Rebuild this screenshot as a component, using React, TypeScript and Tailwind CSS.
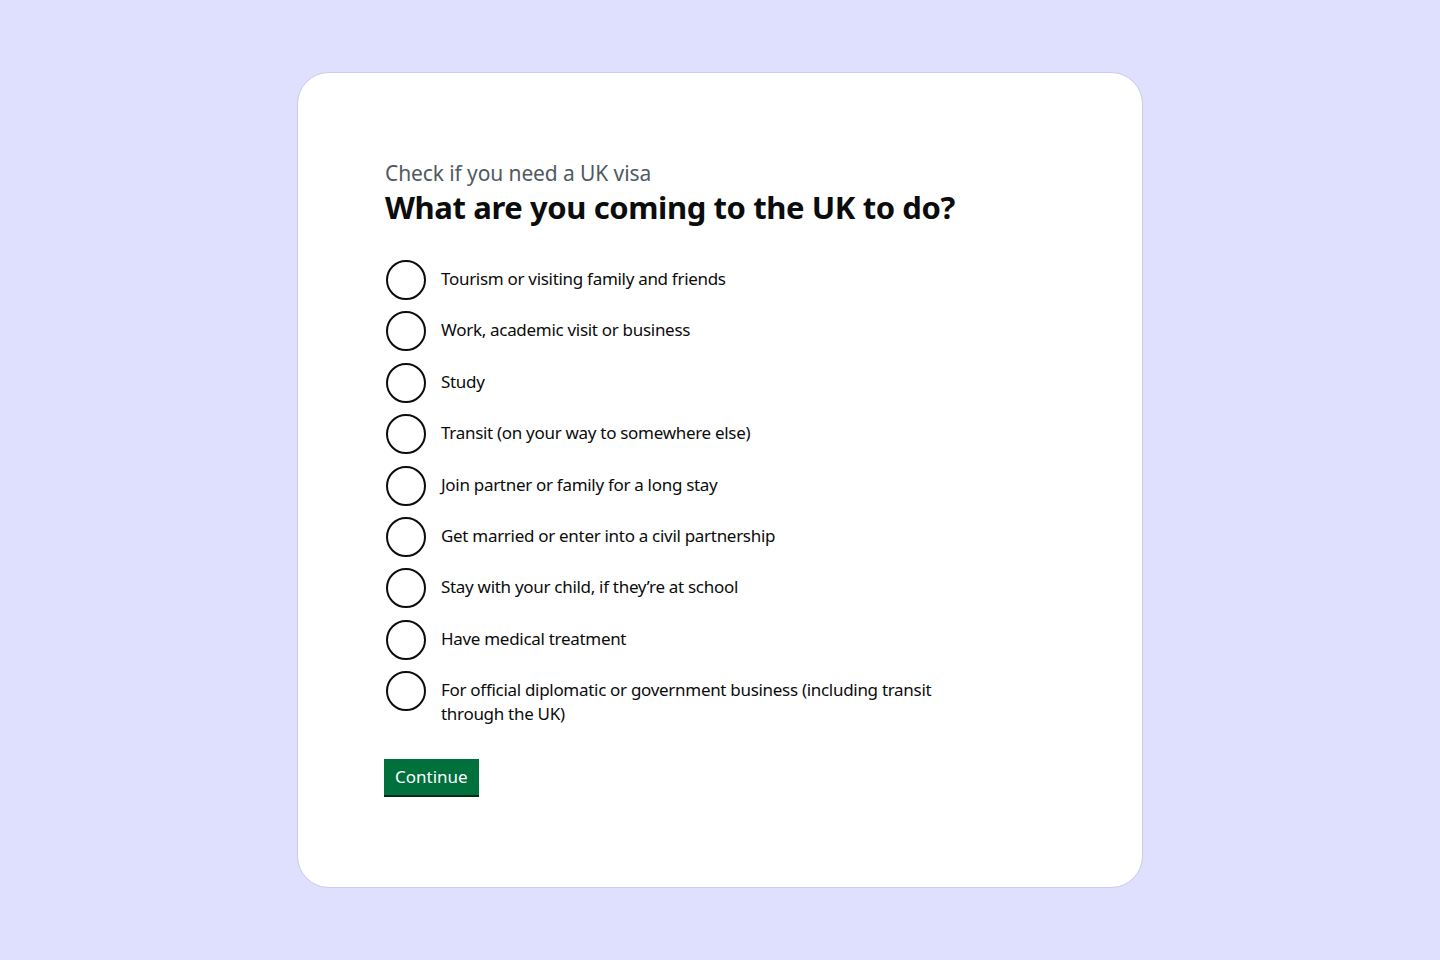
const options = [
  'Tourism or visiting family and friends',
  'Work, academic visit or business',
  'Study',
  'Transit (on your way to somewhere else)',
  'Join partner or family for a long stay',
  'Get married or enter into a civil partnership',
  'Stay with your child, if they\u2019re at school',
  'Have medical treatment',
  'For official diplomatic or government business (including transit through the UK)',
]

export default function App() {
  return (
    <div
      className="min-h-screen w-full bg-[#dfdffe] flex justify-center pt-[72px]"
      style={{ fontFamily: '"Noto Sans", "Liberation Sans", Arial, sans-serif' }}
    >
      <div className="w-[846px] h-[816px] bg-white rounded-[32px] border border-[#cbcaf0] pl-[88px] pt-[86px]">
        <span className="block -ml-[1px] text-[21px] leading-[28px] text-[#505a5f] tracking-[-0.1px]">
          Check if you need a UK visa
        </span>
        <h1 className="-ml-[1px] text-[31px] leading-[40px] font-bold text-[#0b0c0c] tracking-[-0.4px]">
          What are you coming to the UK to do?
        </h1>

        <div className="mt-[33px] flex flex-col gap-[11.4px] w-[580px]">
          {options.map((label) => (
            <label key={label} className="flex items-start cursor-pointer">
              <span className="shrink-0 w-[40px] h-[40px] rounded-full border-2 border-[#0b0c0c] bg-white" />
              <span className="pl-[15px] pt-[7px] text-[17px] leading-[24px] text-[#0b0c0c] tracking-[-0.3px]">
                {label}
              </span>
            </label>
          ))}
        </div>

        <button className="mt-[33px] -ml-[2px] bg-[#00703c] text-white text-[17px] leading-[24px] px-[11px] pt-[6px] pb-[6px] shadow-[0_2px_0_#002d18]">
          Continue
        </button>
      </div>
    </div>
  )
}
